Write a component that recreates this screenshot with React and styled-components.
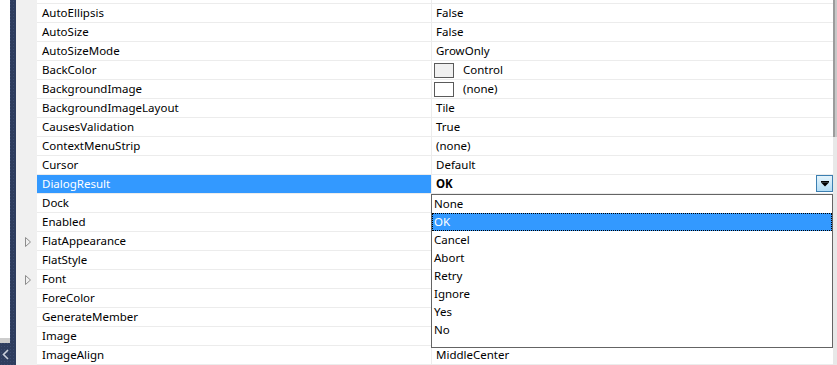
import React from "react";
import styled, { createGlobalStyle, css } from "styled-components";

const Global = createGlobalStyle`
  html, body { margin: 0; padding: 0; background: #ffffff; }
  body { font-family: "Noto Sans", "Segoe UI", "Liberation Sans", sans-serif; }
`;

const Window = styled.div`
  width: 837px;
  height: 365px;
  display: flex;
  overflow: hidden;
  background: #ffffff;
`;

const SidePane = styled.div`
  width: 16px;
  flex: none;
  display: flex;
  flex-direction: column;
  background-color: #2e3d5e;
  background-image: radial-gradient(#3b4b70 0.6px, transparent 0.7px);
  background-size: 3px 3px;
`;

const SideDoc = styled.div`
  width: 10px;
  height: 338px;
  background: #ffffff;
  flex: none;
`;

const SideScroll = styled.div`
  width: 10px;
  height: 5px;
  background: #cdcdcd;
  flex: none;
`;

const SideChevron = styled.div`
  width: 10px;
  display: flex;
  justify-content: center;
  padding-top: 6px;
`;

const Grid = styled.div`
  flex: 1;
  display: flex;
  flex-direction: column;
  min-width: 0;
`;

const Row = styled.div`
  display: grid;
  grid-template-columns: 21px 395px 1fr;
  height: ${(p) => (p.$partial ? 4 : 19)}px;
  flex: none;
`;

const Margin = styled.div`
  background: #f0f0f0;
  display: flex;
  align-items: center;
  padding-left: 9px;
`;

const cellBase = css`
  border-bottom: 1px solid #ececec;
  font-size: 11.5px;
  line-height: 18px;
  white-space: nowrap;
  overflow: hidden;
  display: flex;
  align-items: center;
  color: #000000;
`;

const NameCell = styled.div`
  ${cellBase};
  border-right: 1px solid #ececec;
  padding-left: 5px;
  ${(p) =>
    p.$selected &&
    css`
      background: #3399ff;
      color: #ffffff;
    `}
`;

const ValueCell = styled.div`
  ${cellBase};
  position: relative;
  overflow: visible;
  padding-left: 4px;
  font-weight: ${(p) => (p.$bold ? 700 : 400)};
`;

const Swatch = styled.span`
  width: 18px;
  height: 13px;
  border: 1px solid #5a5a5a;
  background: ${(p) => p.$color};
  margin-left: -2px;
  margin-right: 9px;
  flex: none;
`;

const DropButton = styled.div`
  margin-left: auto;
  align-self: flex-start;
  width: 15px;
  height: 15px;
  border: 1px solid #3c7fb1;
  background: linear-gradient(#e5f4fc, #b4def6);
  display: flex;
  align-items: center;
  justify-content: center;
`;

const List = styled.div`
  position: absolute;
  top: calc(100% + 1px);
  left: -1px;
  right: 0;
  height: 152px;
  background: #ffffff;
  border: 1px solid #646464;
  z-index: 5;
  display: flex;
  flex-direction: column;
`;

const Item = styled.div`
  height: 18px;
  box-sizing: border-box;
  padding-left: 2px;
  font-size: 11.5px;
  font-weight: 400;
  line-height: 18px;
  color: #000000;
  flex: none;
  ${(p) =>
    p.$active &&
    css`
      background: #3399ff;
      color: #ffffff;
      border: 1px dotted #000000;
      padding-left: 1px;
      line-height: 16px;
    `}
`;

const ScrollBar = styled.div`
  width: 4px;
  flex: none;
  background: #e8e8e8;
  display: flex;
  flex-direction: column;
`;

const Thumb = styled.div`
  height: 137px;
  background: #c8c8c8;
  border-left: 2px solid #9c9c9c;
`;

const Expander = () => (
  <svg width="7" height="10" viewBox="0 0 7 10">
    <path d="M0.5 0.5 L5.5 5 L0.5 9.5 Z" fill="none" stroke="#8c8c8c" strokeWidth="1" />
  </svg>
);

const Chevron = () => (
  <svg width="7" height="11" viewBox="0 0 7 11">
    <path d="M6 1 L1.5 5.5 L6 10" fill="none" stroke="#c9cfdb" strokeWidth="1.6" />
  </svg>
);

const ArrowDown = () => (
  <svg width="8" height="6" viewBox="0 0 8 6">
    <rect x="0" y="0" width="8" height="1.5" fill="#000" />
    <path d="M0 1.5 H8 L4 5.5 Z" fill="#000" />
  </svg>
);

const options = ["None", "OK", "Cancel", "Abort", "Retry", "Ignore", "Yes", "No"];

const properties = [
  { name: "AutoEllipsis", value: "False" },
  { name: "AutoSize", value: "False" },
  { name: "AutoSizeMode", value: "GrowOnly" },
  { name: "BackColor", value: "Control", swatch: "#f0f0f0" },
  { name: "BackgroundImage", value: "(none)", swatch: "#ffffff" },
  { name: "BackgroundImageLayout", value: "Tile" },
  { name: "CausesValidation", value: "True" },
  { name: "ContextMenuStrip", value: "(none)" },
  { name: "Cursor", value: "Default" },
  { name: "DialogResult", value: "OK", selected: true, dropdown: true },
  { name: "Dock", value: "" },
  { name: "Enabled", value: "" },
  { name: "FlatAppearance", value: "", expandable: true },
  { name: "FlatStyle", value: "" },
  { name: "Font", value: "", expandable: true },
  { name: "ForeColor", value: "" },
  { name: "GenerateMember", value: "" },
  { name: "Image", value: "" },
  { name: "ImageAlign", value: "MiddleCenter" },
];

export default function App() {
  return (
    <>
      <Global />
      <Window>
        <SidePane>
          <SideDoc />
          <SideScroll />
          <SideChevron>
            <Chevron />
          </SideChevron>
        </SidePane>
        <Grid>
          <Row $partial>
            <Margin />
            <NameCell />
            <ValueCell />
          </Row>
          {properties.map((p) => (
            <Row key={p.name}>
              <Margin>{p.expandable && <Expander />}</Margin>
              <NameCell $selected={p.selected}>{p.name}</NameCell>
              <ValueCell $bold={p.selected}>
                {p.swatch && <Swatch $color={p.swatch} />}
                {p.value}
                {p.dropdown && (
                  <>
                    <DropButton>
                      <ArrowDown />
                    </DropButton>
                    <List>
                      {options.map((o) => (
                        <Item key={o} $active={o === "OK"}>
                          {o}
                        </Item>
                      ))}
                    </List>
                  </>
                )}
              </ValueCell>
            </Row>
          ))}
        </Grid>
        <ScrollBar>
          <Thumb />
        </ScrollBar>
      </Window>
    </>
  );
}
